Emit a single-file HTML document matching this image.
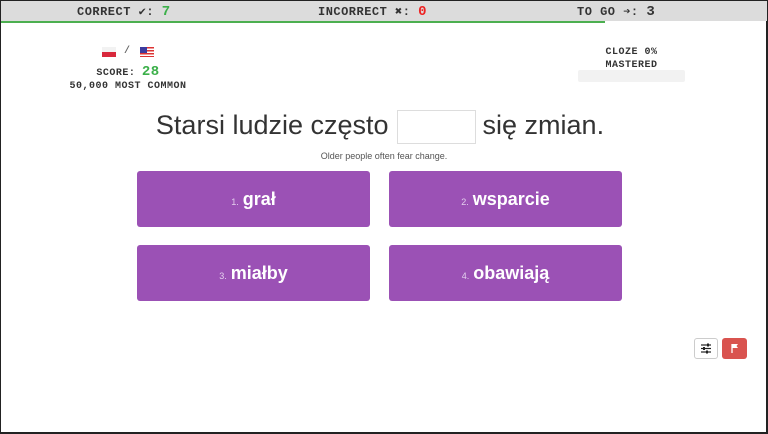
<!DOCTYPE html>
<html><head><meta charset="utf-8"><style>
*{box-sizing:border-box;margin:0;padding:0}
html,body{width:768px;height:434px;overflow:hidden;background:#fff}
body{position:relative;font-family:"Liberation Sans",sans-serif;border:1px solid #222;border-width:1px 2px 2px 1px}
.mono{font-family:"Liberation Mono",monospace;font-weight:bold;letter-spacing:0.5px}
.top{position:absolute;left:0;top:0;width:766px;height:20px;background:#dcdcdc;color:#333;font-size:12px}
.top span{position:absolute;top:3px}
.gl{position:absolute;left:0;top:20px;width:604px;height:2px;background:#4caf50}
.abs{position:absolute}
.btn{position:absolute;width:233px;height:56px;background:#9b51b5;border-radius:3px;color:#fff;font-weight:bold;font-size:18px;text-align:center;line-height:56px}
.btn small{font-size:9px;font-weight:normal;color:#e4cfee;margin-right:4px}
</style></head><body>
<div class="top mono">
<span style="left:76px">CORRECT ✔: <b style="color:#3cb04a;font-size:14px">7</b></span>
<span style="left:317px">INCORRECT ✖: <b style="color:#e22;font-size:14px">0</b></span>
<span style="left:576px">TO GO ➔: <b style="font-size:14px">3</b></span>
</div>
<div class="gl"></div>
<div class="abs" style="left:101px;top:46px;width:14px;height:10px;background:linear-gradient(#f2f2f2 50%,#d8283c 50%)"></div>
<div class="abs mono" style="left:123px;top:45px;font-size:10px;color:#666">/</div>
<div class="abs" style="left:139px;top:46px;width:14px;height:10px;background:repeating-linear-gradient(#d33 0 1.5px,#fff 1.5px 3px)"><div style="width:7px;height:6px;background:#3c3b9e"></div></div>
<div class="abs mono" style="left:0;width:254px;top:63px;text-align:center;font-size:10px;color:#333">SCORE: <b style="color:#3cb04a;font-size:14px">28</b></div>
<div class="abs mono" style="left:0;width:254px;top:80px;text-align:center;font-size:10px;color:#333">50,000 MOST COMMON</div>
<div class="abs mono" style="left:577px;width:107px;top:45px;text-align:center;font-size:10px;color:#333;line-height:13px">CLOZE 0%<br>MASTERED</div>
<div class="abs" style="left:577px;top:69px;width:107px;height:12px;background:#f2f2f2;border-radius:2px"></div>
<div class="abs" style="left:0;width:758px;top:109px;text-align:center;font-size:27px;color:#333;white-space:nowrap">Starsi ludzie często<span style="display:inline-block;width:79px;height:34px;border:1px solid #ddd;vertical-align:middle;margin:0 7px 0 8px"></span>się zmian.</div>
<div class="abs" style="left:0;width:766px;top:150px;text-align:center;font-size:9px;color:#555">Older people often fear change.</div>
<div class="btn" style="left:136px;top:170px"><small>1.</small>grał</div>
<div class="btn" style="left:388px;top:170px"><small>2.</small>wsparcie</div>
<div class="btn" style="left:136px;top:244px"><small>3.</small>miałby</div>
<div class="btn" style="left:388px;top:244px"><small>4.</small>obawiają</div>
<div class="abs" style="left:693px;top:337px;width:24px;height:21px;border:1px solid #ccc;border-radius:3px;background:#fff">
<svg width="22" height="19" viewBox="0 0 22 19"><g stroke="#222" stroke-width="1.2"><line x1="6" y1="6" x2="16" y2="6"/><line x1="6" y1="9.5" x2="16" y2="9.5"/><line x1="6" y1="13" x2="16" y2="13"/></g><g fill="#222"><rect x="12" y="4.5" width="2" height="3"/><rect x="8" y="8" width="2" height="3"/><rect x="11" y="11.5" width="2" height="3"/></g></svg></div>
<div class="abs" style="left:721px;top:337px;width:25px;height:21px;border-radius:3px;background:#d9534f">
<svg width="25" height="21" viewBox="0 0 25 21"><path d="M10 6V15" stroke="#fff" stroke-width="1.3"/><path d="M10.5 6H16L14.5 8L16 10H10.5Z" fill="#fff"/></svg></div>
</body></html>
